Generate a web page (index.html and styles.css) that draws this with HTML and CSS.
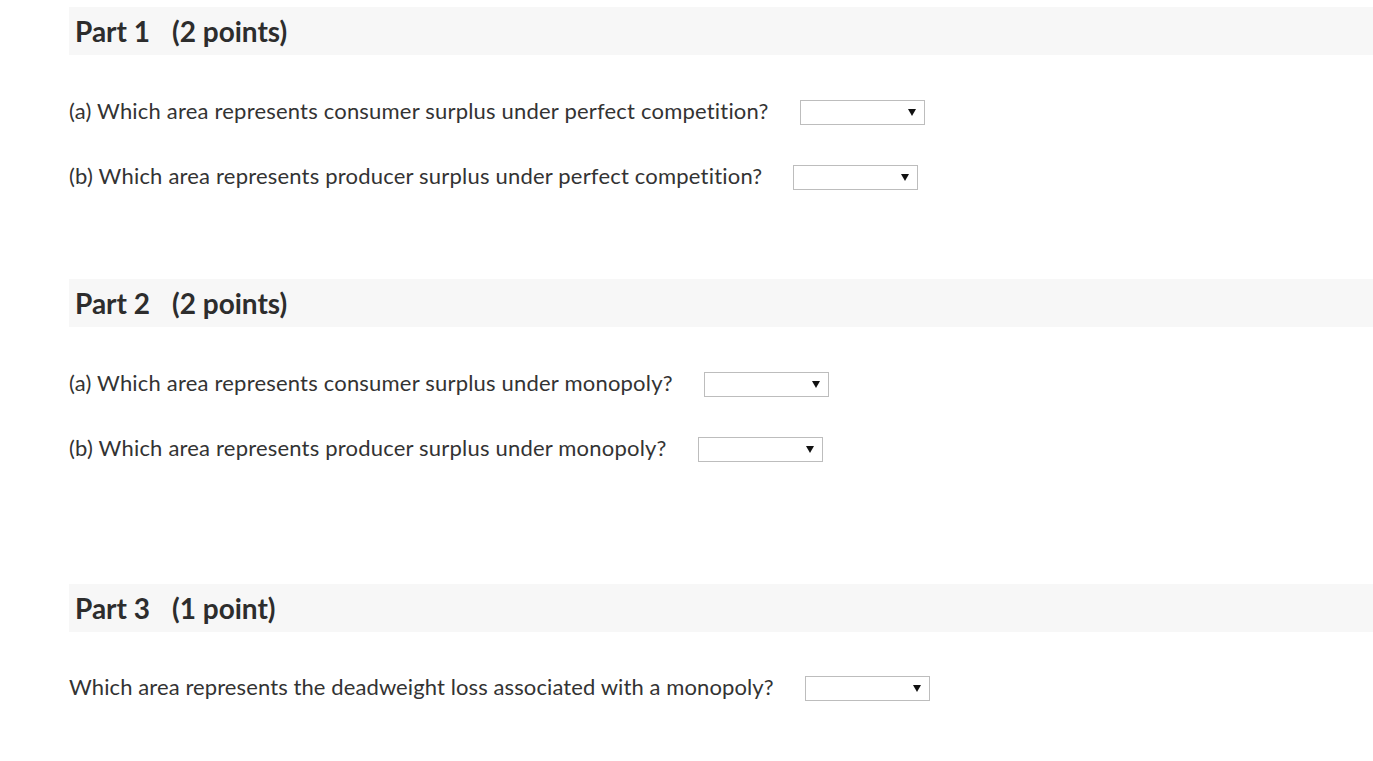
FILE: index.html
```html
<!DOCTYPE html>
<html>
<head>
<meta charset="utf-8">
<link rel="stylesheet" href="styles.css">
</head>
<body>
<div class="page">
  <section class="part part-1">
    <h2 class="part-title"><span class="part-name">Part 1</span><span class="part-points">(2 points)</span></h2>
    <div class="questions">
      <div class="question"><span class="q-text">(a) Which area represents consumer surplus under perfect competition?</span><div class="dropdown"><span class="arrow"></span></div></div>
      <div class="question"><span class="q-text">(b) Which area represents producer surplus under perfect competition?</span><div class="dropdown"><span class="arrow"></span></div></div>
    </div>
  </section>
  <section class="part part-2">
    <h2 class="part-title"><span class="part-name">Part 2</span><span class="part-points">(2 points)</span></h2>
    <div class="questions">
      <div class="question"><span class="q-text">(a) Which area represents consumer surplus under monopoly?</span><div class="dropdown"><span class="arrow"></span></div></div>
      <div class="question"><span class="q-text">(b) Which area represents producer surplus under monopoly?</span><div class="dropdown"><span class="arrow"></span></div></div>
    </div>
  </section>
  <section class="part part-3">
    <h2 class="part-title"><span class="part-name">Part 3</span><span class="part-points">(1 point)</span></h2>
    <div class="questions">
      <div class="question"><span class="q-text q-text-tight">Which area represents the deadweight loss associated with a monopoly?</span><div class="dropdown"><span class="arrow"></span></div></div>
    </div>
  </section>
</div>
</body>
</html>
```

FILE: styles.css
```css
html, body {
  margin: 0;
  padding: 0;
  background: #ffffff;
}
body {
  font-family: Lato, "Open Sans", sans-serif;
  color: #333333;
}
.page {
  padding-left: 69px;
  padding-top: 7px;
  display: flex;
  flex-direction: column;
}
.part-title {
  margin: 0;
  height: 48px;
  background: #f7f7f7;
  padding-left: 6px;
  display: flex;
  align-items: center;
  font-size: 28px;
  font-weight: 700;
  color: #2d2d2d;
  line-height: 48px;
}
.part-name {
  width: 97px;
}
.questions {
  display: flex;
  flex-direction: column;
  gap: 40px;
  padding-top: 45px;
}
.part-3 .questions {
  padding-top: 44px;
}
.question {
  display: flex;
  align-items: center;
  height: 25px;
  gap: 31px;
}
.q-text {
  font-size: 22px;
  letter-spacing: 0.2px;
  line-height: 25px;
  color: #333333;
  position: relative;
  top: -2px;
}
.q-text-tight {
  letter-spacing: 0.1px;
}
.dropdown {
  height: 23px;
  border: 1px solid #bdbdbd;
  background: #fff;
  display: flex;
  align-items: center;
  justify-content: flex-end;
  padding-right: 8px;
  box-sizing: content-box;
  width: 115px;
}
.arrow {
  width: 0;
  height: 0;
  border-left: 4px solid transparent;
  border-right: 4px solid transparent;
  border-top: 7px solid #111;
}
.part-2 {
  margin-top: 89px;
}
.part-3 {
  margin-top: 122px;
}
```
